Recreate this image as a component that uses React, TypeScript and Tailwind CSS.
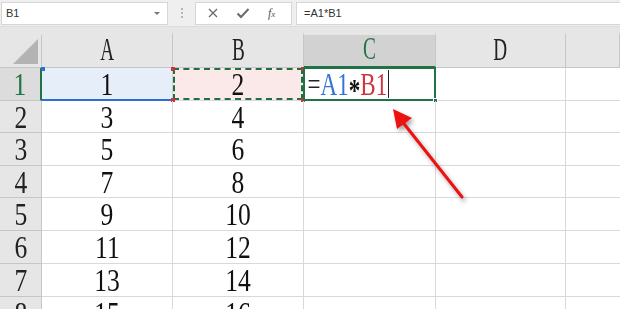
import React from 'react'

const serif = "font-['Liberation_Serif','DejaVu_Serif',serif]"
const sans = "font-['Liberation_Sans','Noto_Sans',sans-serif]"

const colWidths = ['w-[131px]', 'w-[131px]', 'w-[132px]', 'w-[130px]', 'w-[54px]']
const rowHeights = ['h-[33px]', 'h-[32px]', 'h-[33px]', 'h-[32px]', 'h-[33px]', 'h-[33px]', 'h-[33px]', 'h-[33px]']

const data: [string, string][] = [
  ['1', '2'],
  ['3', '4'],
  ['5', '6'],
  ['7', '8'],
  ['9', '10'],
  ['11', '12'],
  ['13', '14'],
  ['15', '16'],
]

function Num({ children, className = '' }: { children: React.ReactNode; className?: string }) {
  return (
    <span className={`${serif} text-[32px] leading-none inline-block scale-x-[0.8] ${className}`}>{children}</span>
  )
}

function TopBar() {
  return (
    <div className="h-[27px] bg-[#efefef] flex items-center border-b border-[#dcdcdc]">
      <div className="ml-[1px] w-[167px] h-[23px] bg-white border border-[#d6d6d6] flex items-center justify-between pl-[4px] pr-[7px]">
        <span className={`${sans} text-[11px] text-[#333]`}>B1</span>
        <span className="w-0 h-0 border-l-[3px] border-r-[3px] border-t-[3px] border-l-transparent border-r-transparent border-t-[#777]" />
      </div>
      <div className="w-[27px] flex flex-col items-center gap-[2px]">
        <span className="w-[2px] h-[2px] bg-[#b5b5b5]" />
        <span className="w-[2px] h-[2px] bg-[#b5b5b5]" />
        <span className="w-[2px] h-[2px] bg-[#b5b5b5]" />
      </div>
      <div className="w-[97px] h-[23px] bg-white border border-[#d6d6d6] flex items-center">
        <svg width="12" height="12" viewBox="0 0 12 12" className="ml-[11px]">
          <path d="M2 2 L10 10 M10 2 L2 10" stroke="#6a6a6a" strokeWidth="1.3" fill="none" />
        </svg>
        <svg width="14" height="12" viewBox="0 0 14 12" className="ml-[17px]">
          <path d="M1.5 6.5 L5 10 L12.5 2" stroke="#6a6a6a" strokeWidth="2" fill="none" />
        </svg>
        <span className={`${serif} italic text-[12px] text-[#555] ml-[18px]`}>
          f<span className="text-[9px]">x</span>
        </span>
      </div>
      <div className="ml-[4px] flex-1 h-[23px] bg-white border border-[#d6d6d6] border-r-0 flex items-center pl-[7px]">
        <span className={`${sans} text-[11px] text-[#333]`}>=A1*B1</span>
      </div>
    </div>
  )
}

function HeaderRow() {
  const letters = ['A', 'B', 'C', 'D', '']
  return (
    <div className="bg-[#e6e6e6]">
      <div className="h-[8px] flex">
        <div className="w-[42px]" />
        {colWidths.map((w, i) => (
          <div key={i} className={`${w} flex`}>
            <div className="flex-1" />
            <div className="w-px mt-[6px] bg-[#d0d0d0]" />
          </div>
        ))}
      </div>
      <div className="h-[33px] flex">
        <div className="w-[42px] relative border-r border-b border-[#c6c6c6]">
          <svg width="26" height="26" viewBox="0 0 26 26" className="absolute right-[2px] bottom-[2px]">
            <path d="M25 0 L25 25 L0 25 Z" fill="#b3b3b3" />
          </svg>
        </div>
        {letters.map((l, i) => (
          <div
            key={i}
            className={`${colWidths[i]} flex items-end justify-center pb-[2px] border-r ${
              i === 2 ? 'bg-[#d2d2d2] border-[#c6c6c6] border-b-2 border-b-[#217346]' : 'border-b border-[#c6c6c6]'
            }`}
          >
            <span
              className={`${serif} text-[31px] leading-none inline-block scale-x-[0.62] ${
                i === 2 ? 'text-[#217346]' : 'text-[#222]'
              }`}
            >
              {l}
            </span>
          </div>
        ))}
      </div>
    </div>
  )
}

function Corner({ pos, color }: { pos: string; color: string }) {
  return <span className={`absolute w-[4px] h-[4px] ${pos} ${color}`} />
}

function Row({ idx }: { idx: number }) {
  const [a, b] = data[idx]
  const first = idx === 0
  return (
    <div className={`${rowHeights[idx]} flex`}>
      <div
        className={`w-[42px] flex items-center justify-center border-b border-[#c6c6c6] ${
          first ? 'bg-[#dcdcdc] border-r-2 border-r-[#217346]' : 'bg-[#e6e6e6] border-r border-r-[#c6c6c6]'
        }`}
      >
        <Num className={first ? 'text-[#217346]' : 'text-[#222]'}>{idx + 1}</Num>
      </div>
      <div
        className={`${colWidths[0]} relative flex items-center justify-center border-r border-b ${
          first ? 'bg-[#e6eef9] border-r-[#d4d4d4] border-b-2 border-b-[#2b6fd6]' : 'border-[#d9d9d9]'
        }`}
      >
        {first && <Corner pos="-left-[1px] -top-[1px]" color="bg-[#2b6fd6]" />}
        <Num className="text-[#111]">{a}</Num>
      </div>
      <div className={`${colWidths[1]} relative flex items-center justify-center border-r border-b border-[#d9d9d9] ${first ? 'bg-[#fbe9e9]' : ''}`}>
        {first && (
          <>
            <span className="absolute inset-0 border-2 border-dashed border-[#1f6e43]" />
            <Corner pos="-left-[2px] -top-[1px]" color="bg-[#d2303c]" />
            <Corner pos="-right-[2px] -top-[1px]" color="bg-[#d2303c]" />
            <Corner pos="-left-[2px] -bottom-[2px]" color="bg-[#d2303c]" />
            <Corner pos="-right-[2px] -bottom-[2px]" color="bg-[#d2303c]" />
          </>
        )}
        <Num className="text-[#111]">{b}</Num>
      </div>
      <div className={`${colWidths[2]} relative flex items-center border-r border-b border-[#d9d9d9]`}>
        {first && (
          <>
            <span className="absolute -left-[1px] -top-[1px] -right-[1px] -bottom-[1px] border-2 border-[#217346]" />
            <span className="absolute -right-[3px] -bottom-[3px] w-[5px] h-[5px] bg-[#217346] border border-white" />
            <span className={`${serif} text-[32px] leading-none inline-block origin-left scale-x-[0.72] pl-[5px] whitespace-nowrap`}>
              <span className="text-[#222]">=</span>
              <span className="text-[#3573d6]">A1</span>
              <span className="text-[#111] font-bold relative top-[6px]">*</span>
              <span className="text-[#d0343f]">B1</span>
            </span>
            <span className="absolute left-[84px] top-[2px] bottom-[2px] w-px bg-[#222]" />
          </>
        )}
      </div>
      <div className={`${colWidths[3]} border-r border-b border-[#d9d9d9]`} />
      <div className={`${colWidths[4]} border-b border-[#d9d9d9]`} />
    </div>
  )
}

export default function App() {
  return (
    <div className="w-[620px] h-[309px] overflow-hidden relative bg-white">
      <TopBar />
      <HeaderRow />
      {data.map((_, i) => (
        <Row key={i} idx={i} />
      ))}
      <svg
        width="620"
        height="309"
        viewBox="0 0 620 309"
        className="absolute inset-0 pointer-events-none drop-shadow-[2px_3px_2px_rgba(0,0,0,0.35)]"
      >
        <line x1="462" y1="197" x2="401" y2="120" stroke="#ee1111" strokeWidth="3" strokeLinecap="round" />
        <path d="M393 109 L412 118 L397 129 Z" fill="#ee1111" />
      </svg>
    </div>
  )
}
